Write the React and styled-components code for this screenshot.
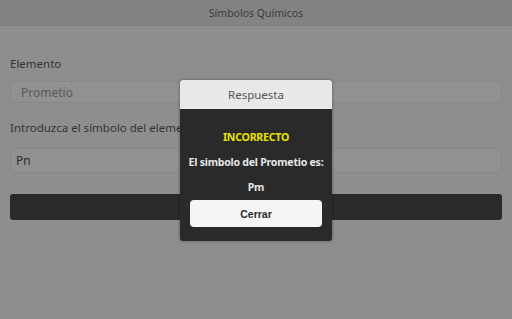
import React from "react";
import styled, { createGlobalStyle } from "styled-components";

const GlobalStyle = createGlobalStyle`
  html, body {
    margin: 0;
    padding: 0;
    height: 100%;
    background: #8e8e8e;
    font-family: "Noto Sans", "DejaVu Sans", sans-serif;
  }
  #root { height: 100%; }
  * { box-sizing: border-box; }
`;

const Page = styled.div`
  position: relative;
  width: 512px;
  height: 319px;
  overflow: hidden;
  background: #8e8e8e;
`;

const Header = styled.header`
  height: 26px;
  display: flex;
  align-items: center;
  justify-content: center;
  background: #838383;
  border-bottom: 1px solid #7e7e7e;
  color: #3c3c3c;
  font-size: 10.5px;
`;

const Form = styled.div`
  padding: 30px 10px 0;
  display: flex;
  flex-direction: column;
`;

const Label = styled.div`
  color: #333;
  font-size: 11.5px;
  line-height: 16px;
  white-space: nowrap;
  margin-bottom: ${p => p.gap}px;
`;

const Input = styled.div`
  height: ${p => p.h}px;
  border: 1px solid #878787;
  border-radius: 3px;
  background: #919191;
  display: flex;
  align-items: center;
  padding-left: ${p => p.indent}px;
  font-size: 12px;
  color: ${p => p.dim ? "#5a5a5a" : "#2c2c2c"};
  margin-bottom: ${p => p.gap}px;
`;

const SubmitBar = styled.div`
  height: 26px;
  margin-top: 1px;
  border-radius: 3px;
  background: #2a2a2a;
`;

const Modal = styled.div`
  position: absolute;
  left: 180px;
  top: 80px;
  width: 152px;
  height: 161px;
  border-radius: 3px;
  background: #2a2a2a;
  box-shadow: 0 0 3px rgba(0, 0, 0, 0.45);
  overflow: hidden;
  display: flex;
  flex-direction: column;
`;

const ModalHead = styled.div`
  height: 29px;
  background: #e8e8e8;
  display: flex;
  align-items: center;
  justify-content: center;
  color: #555;
  font-size: 11.5px;
`;

const ModalBody = styled.div`
  display: flex;
  flex-direction: column;
  align-items: center;
  padding: 20px 0 0;
`;

const Line = styled.div`
  font-size: 10.6px;
  font-weight: bold;
  line-height: 16px;
  letter-spacing: -0.25px;
  white-space: nowrap;
  color: ${p => p.color || "#e6e6e6"};
  margin-bottom: ${p => p.gap}px;
`;

const CloseButton = styled.button`
  width: 132px;
  height: 27px;
  border: none;
  border-radius: 4px;
  background: #f5f5f5;
  color: #2a2a2a;
  font-family: "Liberation Sans", Arial, sans-serif;
  font-weight: bold;
  font-size: 10.5px;
  cursor: pointer;
`;

export default function App() {
  return (
    <>
      <GlobalStyle />
      <Page>
        <Header>Símbolos Químicos</Header>
        <Form>
          <Label gap={9}>Elemento</Label>
          <Input dim indent={10} h={22} gap={17}>Prometio</Input>
          <Label gap={12}>Introduzca el símbolo del elemento</Label>
          <Input indent={5} h={25} gap={20}>Pn</Input>
          <SubmitBar />
        </Form>
        <Modal>
          <ModalHead>Respuesta</ModalHead>
          <ModalBody>
            <Line color="#e6e600" gap={9}>INCORRECTO</Line>
            <Line gap={9}>El simbolo del Prometio es:</Line>
            <Line gap={5}>Pm</Line>
            <CloseButton>Cerrar</CloseButton>
          </ModalBody>
        </Modal>
      </Page>
    </>
  );
}
